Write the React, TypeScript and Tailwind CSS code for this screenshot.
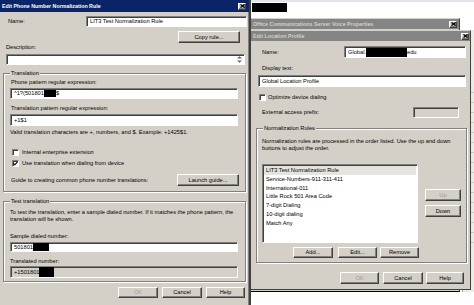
import type { ReactNode } from 'react'

const raised =
  'bg-[#d4d0c8] border border-t-white border-l-white border-r-[#404040] border-b-[#404040] shadow-[inset_-1px_-1px_0_#808080]'
const sunken =
  'border border-t-[#808080] border-l-[#808080] border-r-white border-b-white shadow-[inset_1px_1px_0_#404040]'

function Btn({ label, className = '', disabled = false }: { label: string; className?: string; disabled?: boolean }) {
  return (
    <div
      className={`flex items-center justify-center h-full ${raised} ${
        disabled ? 'text-[#a09c94]' : 'text-black'
      } ${className}`}
    >
      {label}
    </div>
  )
}

function Field({ children, className = '', disabled = false }: { children?: ReactNode; className?: string; disabled?: boolean }) {
  return (
    <div
      className={`flex items-center pl-[3px] whitespace-nowrap ${sunken} ${
        disabled ? 'bg-[#d4d0c8]' : 'bg-white'
      } ${className}`}
    >
      {children}
    </div>
  )
}

function Redact({ className = '' }: { className?: string }) {
  return <span className={`inline-block bg-black ${className}`} />
}

function Check({ checked = false }: { checked?: boolean }) {
  return (
    <div className={`w-[7px] h-[7px] bg-white ${sunken} flex items-center justify-center shrink-0`}>
      {checked && (
        <svg width="5" height="5" viewBox="0 0 5 5">
          <path d="M0.5 2.4 L1.9 3.8 L4.5 0.8" stroke="#000" strokeWidth="1.1" fill="none" />
        </svg>
      )}
    </div>
  )
}

function Close({ className = '' }: { className?: string }) {
  return (
    <div className={`w-[8px] h-[7px] ${raised} flex items-center justify-center ${className}`}>
      <svg width="5" height="4" viewBox="0 0 5 4">
        <path d="M0.5 0.3 L4.5 3.7 M4.5 0.3 L0.5 3.7" stroke="#000" strokeWidth="1.2" />
      </svg>
    </div>
  )
}

function Group({ title, className = '', children }: { title: string; className?: string; children: ReactNode }) {
  return (
    <div
      className={`relative border border-[#808080] shadow-[1px_1px_0_#fff,inset_1px_1px_0_#fff] ${className}`}
    >
      <span className="absolute -top-[4px] left-[6px] bg-[#d4d0c8] px-[1px] leading-[7px]">{title}</span>
      {children}
    </div>
  )
}

const rules = [
  'LIT3 Test Normalization Rule',
  'Service-Numbers-911-311-411',
  'International-011',
  'Little Rock 501 Area Code',
  '7-digit Dialing',
  '10-digit dialing',
  'Match Any',
]

export default function App() {
  return (
    <div className="relative w-[474px] h-[305px] overflow-hidden bg-white font-['Liberation_Sans',Arial,sans-serif] text-[5.7px] leading-[7px] text-black">
      {/* desktop behind */}
      <div className="absolute left-[250px] top-0 w-[224px] h-[2px] bg-[#e4e2f0]" />
      <Redact className="absolute left-[252px] top-[3px] w-[35px] h-[9px]" />
      <div className="absolute left-[462px] top-[30px] w-[12px] h-[262px] bg-[#ecebe6] border-l border-l-[#9a9a9a] flex flex-col pt-[62px] gap-[9px]">
        {Array.from({ length: 16 }).map((_, i) => (
          <div key={i} className="h-px bg-[#c8c8c8]" />
        ))}
      </div>

      {/* Office Communications Server Voice Properties (inactive, behind) */}
      <div className="absolute left-[200px] top-[18px] w-[260px] h-[274px] bg-[#d4d0c8] border border-t-[#d4d0c8] border-r-[#404040] z-0">
        <div className="h-[10px] bg-[#858585] flex items-center pl-[52px] pr-[2px]">
          <span className="font-bold text-[5.3px] text-[#d4d0c8] whitespace-nowrap">
            Office Communications Server Voice Properties
          </span>
          <Close className="ml-auto" />
        </div>
      </div>

      {/* Edit Location Profile */}
      <div className="absolute left-[246px] top-[30px] w-[225px] h-[260px] z-10 bg-[#d4d0c8] border border-t-[#d4d0c8] border-r-[#404040] border-b-[#404040] flex flex-col">
        <div className="h-[10px] bg-[#858585] flex items-center pl-[6px] pr-[1px] shrink-0">
          <span className="font-bold text-[5.3px] text-[#d4d0c8] whitespace-nowrap">Edit Location Profile</span>
          <Close className="ml-auto" />
        </div>

        <div className="flex items-center mt-[5px] h-[12px]">
          <span className="pl-[15px] w-[97px]">Name:</span>
          <Field className="w-[122px] h-full">
            Global.<Redact className="w-[41px] h-[9px]" />
            edu
          </Field>
        </div>

        <div className="mt-[6.5px] h-[7px] pl-[15px]">Display text:</div>
        <Field className="mt-[3.5px] ml-[11px] w-[208px] h-[12px]">Global Location Profile</Field>

        <div className="flex items-center gap-[2px] mt-[6.5px] h-[7px] pl-[12px]">
          <Check />
          <span>Optimize device dialing</span>
        </div>

        <div className="flex items-center mt-[6.5px] h-[11px]">
          <span className="pl-[15px] w-[166px] whitespace-nowrap">External access prefix:</span>
          <Field disabled className="w-[46px] h-full" />
        </div>

        <Group title="Normalization Rules" className="mt-[10px] ml-[9px] w-[211px] pb-[4px]">
          <div className="pt-[8.5px] pl-[5px] whitespace-nowrap">
            Normalization rules are processed in the order listed. Use the up and down
            <br />
            buttons to adjust the order.
          </div>
          <div className="flex mt-[12.5px] pl-[5px]">
            <div className={`w-[156px] h-[79px] bg-white ${sunken} pt-[1px] pl-[1px] flex flex-col`}>
              {rules.map((r, i) => (
                <div
                  key={r}
                  className={`h-[8.8px] leading-[8.8px] pl-[2px] whitespace-nowrap ${
                    i === 0 ? 'bg-[#e6e4df] mr-[1px]' : ''
                  }`}
                >
                  {r}
                </div>
              ))}
            </div>
            <div className="flex flex-col ml-[7px] w-[36px]">
              <div className="mt-[25px] h-[12px]">
                <Btn label="Up" disabled />
              </div>
              <div className="mt-[4px] h-[12px]">
                <Btn label="Down" />
              </div>
            </div>
          </div>
          <div className="flex mt-[4px] h-[11px] pl-[36px]">
            <Btn label="Add..." className="w-[40px]" />
            <Btn label="Edit..." className="w-[39px] ml-[5px]" />
            <Btn label="Remove" className="w-[39px] ml-[3px]" />
          </div>
        </Group>

        <div className="flex mt-[9px] h-[12px] pl-[93px]">
          <Btn label="OK" disabled className="w-[39px]" />
          <Btn label="Cancel" className="w-[40px] ml-[4px]" />
          <Btn label="Help" className="w-[38px] ml-[3px]" />
        </div>
      </div>

      {/* Edit Phone Number Normalization Rule (active) */}
      <div className="absolute left-0 top-0 w-[251px] h-[305px] z-20 bg-[#d4d0c8] border-r-2 border-r-[#404040] shadow-[inset_-1px_0_0_#808080] flex flex-col">
        <div className="h-[12px] bg-[#0a246a] flex items-center pl-[2px] pr-[3px] shrink-0">
          <span className="font-bold text-[5.3px] text-white whitespace-nowrap">Edit Phone Number Normalization Rule</span>
          <Close className="ml-auto" />
        </div>

        <div className="flex items-center mt-[4px] h-[11px]">
          <span className="pl-[8px] w-[86px]">Name:</span>
          <Field className="w-[161px] h-full">LIT3 Test Normalization Rule</Field>
        </div>

        <div className="mt-[4px] h-[12px] pl-[178px]">
          <Btn label="Copy rule..." className="w-[62px]" />
        </div>

        <div className="mt-[1px] h-[7px] pl-[6px]">Description:</div>
        <Field className="mt-[3px] ml-[6px] w-[239px] h-[11px] justify-end pr-[1px]">
          <div className="flex flex-col gap-[1px] w-[7px]">
            <svg width="7" height="3" viewBox="0 0 7 3">
              <path d="M1 2.5 L3.5 0.3 L6 2.5 Z" fill="#606060" />
            </svg>
            <svg width="7" height="3" viewBox="0 0 7 3">
              <path d="M1 0.5 L3.5 2.7 L6 0.5 Z" fill="#606060" />
            </svg>
          </div>
        </Field>

        <Group title="Translation" className="mt-[8px] ml-[3px] w-[243px] pb-[5px]">
          <div className="pt-[4.5px] pl-[7px] h-[11.5px]">Phone pattern regular expression:</div>
          <Field className="mt-[2.5px] ml-[6px] w-[228px] h-[11px]">
            ^1?(501801
            <Redact className="w-[12px] h-[7px]" />$
          </Field>
          <div className="mt-[5.5px] pl-[7px] h-[7px]">Translation pattern regular expression:</div>
          <Field className="mt-[2.5px] ml-[6px] w-[228px] h-[12px]">+1$1</Field>
          <div className="mt-[2.5px] pl-[6px] h-[7px] whitespace-nowrap">
            Valid translation characters are +, numbers, and $. Example: +1425$1.
          </div>
          <div className="flex items-center gap-[3px] mt-[13px] h-[7px] pl-[8px]">
            <Check />
            <span>Internal enterprise extension</span>
          </div>
          <div className="flex items-center gap-[3px] mt-[4px] h-[7px] pl-[8px]">
            <Check checked />
            <span>Use translation when dialing from device</span>
          </div>
          <div className="flex items-center mt-[7.5px] h-[12px]">
            <span className="pl-[7px] w-[173px] whitespace-nowrap">Guide to creating common phone number translations:</span>
            <Btn label="Launch guide..." className="w-[62px]" />
          </div>
        </Group>

        <Group title="Test translation" className="mt-[9px] ml-[3px] w-[243px] pb-[3px]">
          <div className="pt-[6.5px] pl-[6px] whitespace-nowrap">
            To test the translation, enter a sample dialed number. If it matches the phone pattern, the
            <br />
            translation will be shown.
          </div>
          <div className="mt-[10px] pl-[6px] h-[7px]">Sample dialed number:</div>
          <Field className="mt-[2.5px] ml-[6px] w-[228px] h-[10px]">
            501801
            <Redact className="w-[16px] h-[8px]" />
          </Field>
          <div className="mt-[5.5px] pl-[6px] h-[7px]">Translated number:</div>
          <Field disabled className="mt-[1.5px] ml-[6px] w-[228px] h-[12px]">
            +1501801
            <Redact className="w-[15px] h-[10px]" />
          </Field>
        </Group>

        <div className="flex mt-[5px] h-[11px] pl-[118px]">
          <Btn label="OK" disabled className="w-[40px]" />
          <Btn label="Cancel" className="w-[40px] ml-[4px]" />
          <Btn label="Help" className="w-[39px] ml-[4px]" />
        </div>
      </div>
    </div>
  )
}
